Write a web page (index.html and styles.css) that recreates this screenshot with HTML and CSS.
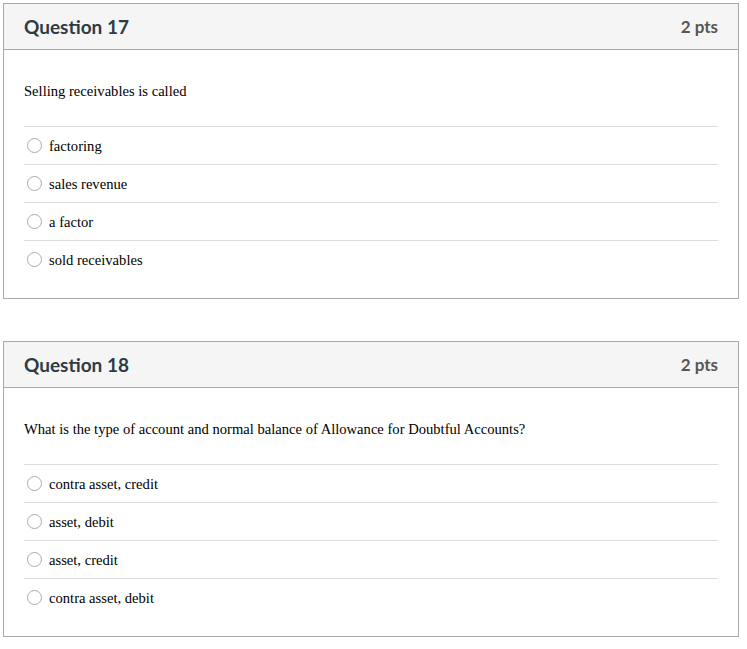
FILE: index.html
```html
<!DOCTYPE html>
<html>
<head>
<meta charset="utf-8">
<link rel="stylesheet" href="styles.css">
</head>
<body>
<div class="quiz">
  <div class="card">
    <div class="card-header">
      <span class="title">Question 17</span>
      <span class="pts">2 pts</span>
    </div>
    <div class="card-body">
      <p class="question">Selling receivables is called</p>
      <div class="answers">
        <label class="answer"><span class="radio"></span><span class="label">factoring</span></label>
        <label class="answer"><span class="radio"></span><span class="label">sales revenue</span></label>
        <label class="answer"><span class="radio"></span><span class="label">a factor</span></label>
        <label class="answer"><span class="radio"></span><span class="label">sold receivables</span></label>
      </div>
    </div>
  </div>
  <div class="card">
    <div class="card-header">
      <span class="title">Question 18</span>
      <span class="pts">2 pts</span>
    </div>
    <div class="card-body">
      <p class="question">What is the type of account and normal balance of Allowance for Doubtful Accounts?</p>
      <div class="answers">
        <label class="answer"><span class="radio"></span><span class="label">contra asset, credit</span></label>
        <label class="answer"><span class="radio"></span><span class="label">asset, debit</span></label>
        <label class="answer"><span class="radio"></span><span class="label">asset, credit</span></label>
        <label class="answer"><span class="radio"></span><span class="label">contra asset, debit</span></label>
      </div>
    </div>
  </div>
</div>
</body>
</html>
```
FILE: styles.css
```css
html, body {
  background: #ffffff;
}
body {
  margin: 3px 8px 0 3px;
}
.quiz {
  display: flex;
  flex-direction: column;
  gap: 42px;
}
.card {
  border: 1px solid #a9a9a9;
  background: #fff;
}
.card-header {
  height: 46px;
  box-sizing: border-box;
  padding: 0 20px;
  display: flex;
  align-items: center;
  justify-content: space-between;
  background: #f5f5f5;
  border-bottom: 1px solid #a9a9a9;
  font-family: Lato, "Liberation Sans", sans-serif;
  font-weight: 700;
}
.title {
  font-size: 19px;
  color: #2d3b45;
}
.pts {
  font-size: 17px;
  color: #565656;
}
.card-body {
  padding: 31px 20px 20px 20px;
  font-family: "Liberation Serif", "Times New Roman", serif;
  font-size: 14.6px;
  color: #000;
}
.question {
  margin: 0 0 25px 0;
  line-height: 20px;
}
.answer {
  display: flex;
  align-items: center;
  height: 38px;
  box-sizing: border-box;
  border-top: 1px solid #dddddd;
}
.radio {
  width: 13px;
  height: 13px;
  border: 1px solid #ababab;
  border-radius: 50%;
  margin-left: 3px;
  margin-right: 7px;
  background: #fff;
  flex: none;
}
.label {
  line-height: 20px;
}
```
